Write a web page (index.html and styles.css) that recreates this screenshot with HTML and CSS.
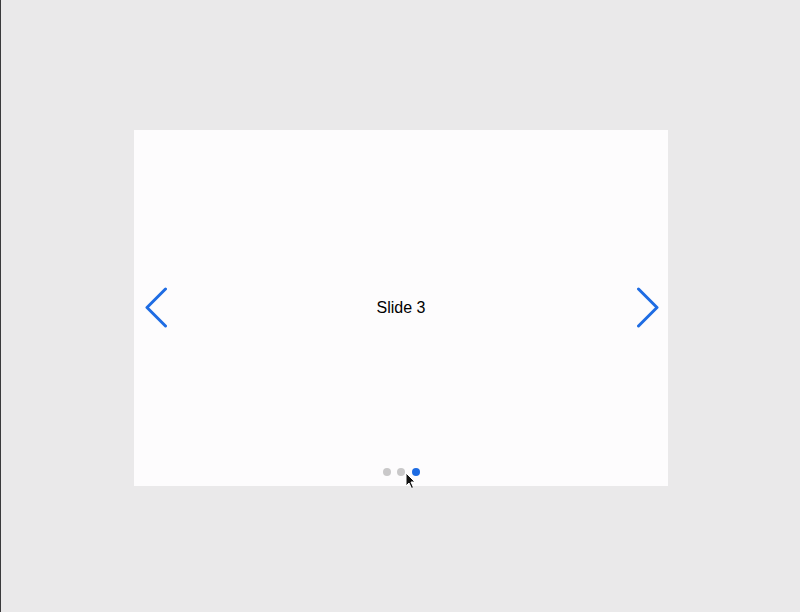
FILE: index.html
```html
<!DOCTYPE html>
<html>
<head>
<meta charset="utf-8">
<link rel="stylesheet" href="styles.css">
</head>
<body>
<div class="page">
  <div class="swiper">
    <button class="nav prev" aria-label="Previous">
      <svg width="24" height="42" viewBox="0 0 24 42"><path d="M20.5 2 L2 20.5 L20.5 39" fill="none" stroke="#1e6ce3" stroke-width="3" stroke-linecap="round" stroke-linejoin="round"/></svg>
    </button>
    <div class="slide">Slide 3</div>
    <button class="nav next" aria-label="Next">
      <svg width="24" height="42" viewBox="0 0 24 42"><path d="M3.5 2 L22 20.5 L3.5 39" fill="none" stroke="#1e6ce3" stroke-width="3" stroke-linecap="round" stroke-linejoin="round"/></svg>
    </button>
    <div class="dots">
      <span class="dot"></span>
      <span class="dot"></span>
      <span class="dot active"></span>
    </div>
    <svg class="cursor" width="12" height="18" viewBox="0 0 12 18"><path d="M1 1 L1 14 L4 11 L6.5 16.5 L8.5 15.5 L6 10 L10 10 Z" fill="#111" stroke="#fff" stroke-width="1"/></svg>
  </div>
</div>
</body>
</html>
```
FILE: styles.css
```css
html, body {
  margin: 0;
  padding: 0;
  height: 100%;
}
body {
  background: #eae9ea;
  font-family: "Liberation Sans", Arial, sans-serif;
}
.page {
  box-sizing: border-box;
  height: 612px;
  border-left: 1px solid #3a3a3c;
  display: flex;
  justify-content: center;
  align-items: flex-start;
  padding: 130px 0 0 0;
}
.swiper {
  position: relative;
  width: 534px;
  height: 356px;
  background: #fdfcfd;
  margin-left: 1px;
}
.slide {
  height: 100%;
  display: flex;
  align-items: center;
  justify-content: center;
  font-size: 16px;
  color: #000;
}
.nav {
  position: absolute;
  top: 156px;
  width: 27px;
  height: 44px;
  padding: 0;
  border: 0;
  background: none;
  display: flex;
  align-items: center;
  justify-content: center;
}
.prev { left: 9px; }
.next { right: 8px; }
.dots {
  position: absolute;
  left: 0;
  right: 0;
  bottom: 10px;
  display: flex;
  justify-content: center;
  gap: 6.5px;
}
.dot {
  width: 8px;
  height: 8px;
  border-radius: 50%;
  background: #c9c8c9;
}
.dot.active {
  background: #1e6ce3;
}
.cursor {
  position: absolute;
  left: 271px;
  top: 342px;
}
```
